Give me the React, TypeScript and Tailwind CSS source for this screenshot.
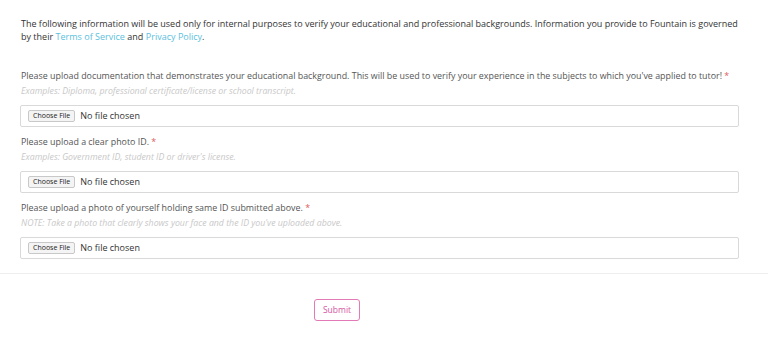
export default function App() {
  const fields = [
    {
      label:
        "Please upload documentation that demonstrates your educational background. This will be used to verify your experience in the subjects to which you've applied to tutor!",
      hint: "Examples: Diploma, professional certificate/license or school transcript.",
    },
    {
      label: "Please upload a clear photo ID.",
      hint: "Examples: Government ID, student ID or driver's license.",
    },
    {
      label: "Please upload a photo of yourself holding same ID submitted above.",
      hint: "NOTE: Take a photo that clearly shows your face and the ID you've uploaded above.",
    },
  ]

  return (
    <div
      className="w-[768px] h-[340px] bg-white overflow-hidden"
      style={{ fontFamily: '"Open Sans", "Noto Sans", sans-serif' }}
    >
      <div className="pl-[21px] pr-[10px] pt-[17px]">
        <div className="text-[9px] leading-[13px] text-[#333]">
          <p className="whitespace-nowrap">
            The following information will be used only for internal purposes to verify your educational and
            professional backgrounds. Information you provide to Fountain is governed
          </p>
          <p className="flex gap-[2.5px]">
            <span>by their</span>
            <a className="text-[#5bc0de]">Terms of Service</a>
            <span>and</span>
            <a className="text-[#5bc0de]">Privacy Policy</a>
            <span className="-ml-[2.5px]">.</span>
          </p>
        </div>

        <div className="mt-[26px] flex flex-col gap-[8px]">
          {fields.map((f, i) => (
            <div key={i} className="flex flex-col">
              <label className="text-[8.9px] leading-[14px] text-[#555] whitespace-nowrap">
                {f.label} <span className="text-[#e05a5a]">*</span>
              </label>
              <span className="mt-[1px] text-[8.75px] leading-[14px] italic text-[#c8c8c8]">{f.hint}</span>
              <div className="mt-[7px] ml-[-1px] w-[719px] h-[22px] border border-[#d9d9d9] rounded-[2px] flex items-center pl-[7px]">
                <span className="px-[4px] h-[12px] flex items-center border border-[#c8c8c8] rounded-[2px] bg-[#f4f4f4] text-[7px] text-[#222]">
                  Choose File
                </span>
                <span className="ml-[5px] text-[9px] text-[#333]">No file chosen</span>
              </div>
            </div>
          ))}
        </div>
      </div>

      <div className="mt-[14px] border-t border-[#eeeeee]" />

      <div className="flex pl-[314px] pt-[25px]">
        <button className="w-[46px] h-[22px] border border-[#e27bb5] rounded-[3px] text-[8.5px] text-[#d6559f]">
          Submit
        </button>
      </div>
    </div>
  )
}
